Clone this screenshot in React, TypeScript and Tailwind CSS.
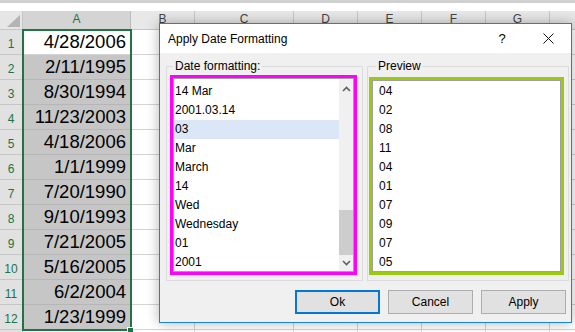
const dates = [
  "4/28/2006",
  "2/11/1995",
  "8/30/1994",
  "11/23/2003",
  "4/18/2006",
  "1/1/1999",
  "7/20/1990",
  "9/10/1993",
  "7/21/2005",
  "5/16/2005",
  "6/2/2004",
  "1/23/1999",
];

const formats = ["14 Mar", "2001.03.14", "03", "Mar", "March", "14", "Wed", "Wednesday", "01", "2001"];
const preview = ["04", "02", "08", "11", "04", "01", "07", "09", "07", "05"];

const cols = [
  { name: "B", w: "w-[64px]" },
  { name: "C", w: "w-[99px]" },
  { name: "D", w: "w-[64px]" },
  { name: "E", w: "w-[64px]" },
  { name: "F", w: "w-[64px]" },
  { name: "G", w: "w-[64px]" },
];

function Chevron({ up }: { up?: boolean }) {
  return (
    <svg width="9" height="6" viewBox="0 0 9 6">
      <path
        d={up ? "M1 5 L4.5 1.5 L8 5" : "M1 1 L4.5 4.5 L8 1"}
        fill="none"
        stroke="#606060"
        strokeWidth="1.6"
      />
    </svg>
  );
}

function Sheet() {
  return (
    <div className="flex flex-col font-['Liberation_Sans',Arial,sans-serif]">
      <div className="h-[3px] bg-[#d0d0d0]" />
      <div className="h-[8px] bg-white" />
      <div className="flex h-[19px]">
        <div className="w-[23px] shrink-0 bg-[#e6e6e6] border-r border-b border-[#c6c6c6] flex items-end justify-end pr-[2px] pb-[2px]">
          <svg width="13" height="12" viewBox="0 0 13 12">
            <path d="M13 0 L13 12 L0 12 Z" fill="#b4b4b4" />
          </svg>
        </div>
        <div className="w-[108px] shrink-0 bg-[#d4d4d4] border-r border-[#bcbcbc] flex items-end justify-center pb-[5px] text-[12px] leading-none text-[#217346]">
          A
        </div>
        {cols.map((c) => (
          <div
            key={c.name}
            className={`${c.w} shrink-0 bg-[#e8e8e8] border-r border-b border-[#c6c6c6] flex items-end justify-center pb-[4px] text-[12px] leading-none text-[#444]`}
          >
            {c.name}
          </div>
        ))}
        <div className="flex-1 bg-[#e8e8e8] border-b border-[#c6c6c6]" />
      </div>
      {[...dates, ""].map((d, i) => (
        <div key={i} className="flex h-[25px]">
          <div className="w-[23px] shrink-0 bg-[#e1e1e1] border-r border-b border-[#c6c6c6] flex items-end justify-center pb-[4px] text-[12px] leading-none text-[#217346]">
            {i < 12 ? i + 1 : ""}
          </div>
          <div
            className={`w-[108px] shrink-0 border-r border-b flex items-end justify-end pr-[4px] pb-[3px] text-[18.5px] leading-none text-black ${
              i === 0 || i === 12 ? "bg-white border-[#d4d4d4]" : "bg-[#c6c6c6] border-[#b6b6b6]"
            }`}
          >
            {d}
          </div>
          {cols.map((c) => (
            <div key={c.name} className={`${c.w} shrink-0 bg-white border-r border-b border-[#d4d4d4]`} />
          ))}
          <div className="flex-1 bg-white border-b border-[#d4d4d4]" />
        </div>
      ))}
    </div>
  );
}

function Dialog() {
  return (
    <div className="absolute left-[159px] top-[23px] w-[413px] h-[300px] border border-[#1883d7] bg-[#f0f0f0] shadow-[0_0_12px_rgba(0,0,0,0.3)] flex flex-col font-['Liberation_Sans',Arial,sans-serif] text-[12px] text-black">
      <div className="h-[29px] bg-white flex items-center">
        <div className="flex-1 pl-[8px]">Apply Date Formatting</div>
        <div className="w-[46px] h-full flex items-center justify-center text-[13px]">?</div>
        <div className="w-[46px] h-full flex items-center justify-center">
          <svg width="11" height="11" viewBox="0 0 11 11">
            <path d="M0.5 0.5 L10.5 10.5 M10.5 0.5 L0.5 10.5" stroke="#111" strokeWidth="1" />
          </svg>
        </div>
      </div>

      <div className="flex gap-[4px] pl-[6px] mt-[6px]">
        <fieldset className="w-[197px] h-[222px] border border-[#dcdcdc]">
          <legend className="ml-[6px] px-[2px] leading-[14px]">Date formatting:</legend>
          <div className="ml-[3px] mt-[2px] w-[187px] h-[200px] border-[3px] border-[#ff00ff]">
            <div className="h-full border border-[#a0a0a0] bg-white flex overflow-hidden">
              <div className="flex-1 pt-[3px]">
                {formats.map((f, i) => (
                  <div
                    key={i}
                    className={`h-[19px] leading-[19px] pl-[1px] ${i === 2 ? "bg-[#dbe6f6]" : ""}`}
                  >
                    {f}
                  </div>
                ))}
              </div>
              <div className="w-[14px] bg-[#f0f0f0] flex flex-col">
                <div className="h-[20px] flex items-center justify-center">
                  <Chevron up />
                </div>
                <div className="flex-1" />
                <div className="h-[45px] bg-[#cdcdcd]" />
                <div className="h-[16px] flex items-center justify-center">
                  <Chevron />
                </div>
              </div>
            </div>
          </div>
        </fieldset>

        <fieldset className="w-[202px] h-[222px] border border-[#dcdcdc]">
          <legend className="ml-[8px] px-[2px] leading-[14px]">Preview</legend>
          <div className="ml-[1px] mt-[4px] w-[195px] h-[198px] border-[3px] border-[#9bcb0c]">
            <div className="h-full border border-[#a0a0a0] bg-white pt-[1px] pl-[6px] overflow-hidden">
              {preview.map((p, i) => (
                <div key={i} className="h-[19px] leading-[19px]">
                  {p}
                </div>
              ))}
            </div>
          </div>
        </fieldset>
      </div>

      <div className="flex justify-end gap-[8px] pr-[5px] mt-[9px]">
        <button className="w-[85px] h-[24px] border-2 border-[#0078d7] bg-[#e1e1e1]">Ok</button>
        <button className="w-[85px] h-[24px] border border-[#adadad] bg-[#e1e1e1]">Cancel</button>
        <button className="w-[85px] h-[24px] border border-[#adadad] bg-[#e1e1e1]">Apply</button>
      </div>
    </div>
  );
}

export default function App() {
  return (
    <div className="relative w-[575px] h-[332px] overflow-hidden bg-white">
      <Sheet />
      <div className="absolute left-[22px] top-[29px] w-[110px] h-[302px] border-2 border-[#217346] pointer-events-none" />
      <div className="absolute left-[127px] top-[327px] w-[7px] h-[7px] bg-[#217346] border border-white" />
      <Dialog />
    </div>
  );
}
